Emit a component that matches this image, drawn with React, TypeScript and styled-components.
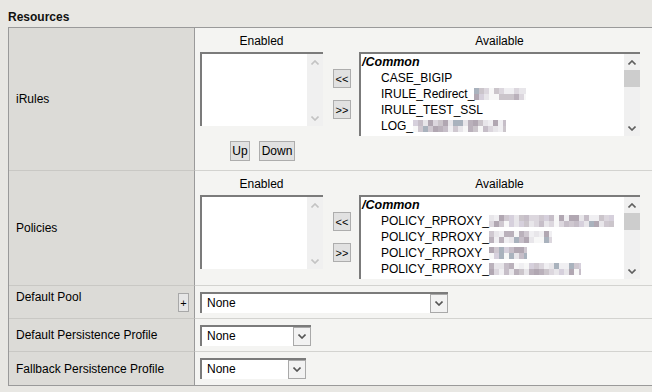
import React from "react";
import styled, { createGlobalStyle } from "styled-components";

const GlobalStyle = createGlobalStyle`
  html, body {
    margin: 0;
    padding: 0;
    background: #e8e7e3;
  }
  body {
    font-family: "Liberation Sans", Arial, sans-serif;
    font-size: 12px;
    color: #000;
  }
`;

const Page = styled.div`
  padding-left: 8px;
  width: 644px;
`;

const Title = styled.h2`
  margin: 0;
  padding: 10px 0 3px;
  font-size: 12px;
  line-height: 14px;
  font-weight: bold;
  color: #111;
`;

const Table = styled.div`
  display: grid;
  grid-template-columns: 186px 1fr;
  border-top: 1px solid #9a9a9a;
  border-left: 1px solid #9a9a9a;
  border-bottom: 1px solid #9a9a9a;
`;

const LabelCell = styled.div<{ $top?: boolean; $last?: boolean }>`
  display: flex;
  align-items: ${(p) => (p.$top ? "flex-start" : "center")};
  justify-content: space-between;
  box-sizing: border-box;
  min-height: 33px;
  padding: ${(p) => (p.$top ? "4px 5px 0 7px" : "0 5px 0 7px")};
  background: #dcdbd7;
  border-right: 1px solid #9a9a9a;
  border-bottom: ${(p) => (p.$last ? "none" : "1px solid #c9c8c4")};
  line-height: 14px;
`;

const ValueCell = styled.div<{ $pick?: boolean; $last?: boolean; $pb?: number }>`
  display: flex;
  flex-direction: ${(p) => (p.$pick ? "column" : "row")};
  align-items: ${(p) => (p.$pick ? "flex-start" : "center")};
  box-sizing: border-box;
  min-height: 33px;
  padding: ${(p) => (p.$pick ? `6px 5px ${p.$pb ?? 6}px` : "0 5px")};
  background: #f4f4f2;
  border-bottom: ${(p) => (p.$last ? "none" : "1px solid #d3d3d0")};
`;

const PickRow = styled.div`
  display: flex;
  align-items: flex-start;
`;

const PickColumn = styled.div<{ $w: number }>`
  display: flex;
  flex-direction: column;
  width: ${(p) => p.$w}px;
`;

const ColHead = styled.div`
  text-align: center;
  line-height: 14px;
  margin-bottom: 4px;
`;

const MoveButtons = styled.div`
  display: flex;
  flex-direction: column;
  gap: 12px;
  width: 18px;
  margin: 35px 8px 0 10px;
`;

const SmallButton = styled.button<{ $w?: number }>`
  box-sizing: border-box;
  width: ${(p) => p.$w ?? 18}px;
  height: ${(p) => (p.$w ? 20 : 19)}px;
  padding: 0;
  margin: 0;
  background: #e1e1e1;
  border: 1px solid #adadad;
  border-radius: 0;
  font-family: "Liberation Sans", Arial, sans-serif;
  font-size: ${(p) => (p.$w ? 12 : 11)}px;
  line-height: 16px;
  color: #000;
`;

const OrderRow = styled.div`
  display: flex;
  gap: 9px;
  margin: 5px 0 0 30px;
`;

const ListBox = styled.div<{ $h: number }>`
  display: flex;
  box-sizing: border-box;
  height: ${(p) => p.$h}px;
  background: #fff;
  border-top: 2px solid #7b7b7b;
  border-left: 2px solid #7b7b7b;
  overflow: hidden;
`;

const ListBody = styled.div`
  flex: 1;
  overflow: hidden;
  line-height: 16px;
  white-space: nowrap;
`;

const Folder = styled.div`
  padding-left: 1px;
  font-weight: bold;
  font-style: italic;
  font-size: 12.5px;
`;

const Item = styled.div`
  padding-left: 20px;
`;

const ScrollBar = styled.div<{ $dim?: boolean }>`
  display: flex;
  flex-direction: column;
  width: 16px;
  background: #f0f0f0;
  color: ${(p) => (p.$dim ? "#c3c3c3" : "#5f5f5f")};
`;

const ScrollArrow = styled.div`
  display: flex;
  align-items: center;
  justify-content: center;
  height: 16px;
`;

const Track = styled.div`
  flex: 1;
`;

const Thumb = styled.div`
  height: 17px;
  background: #cdcdcd;
`;

const PlusButton = styled.span`
  box-sizing: border-box;
  display: flex;
  align-items: center;
  justify-content: center;
  width: 11px;
  height: 19px;
  margin-top: 3px;
  background: #e6e6e6;
  border: 1px solid #a8a8a8;
  font-size: 11px;
`;

const Select = styled.div<{ $w: number }>`
  display: flex;
  box-sizing: border-box;
  width: ${(p) => p.$w}px;
  height: 21px;
  background: #fff;
  border-top: 2px solid #7b7b7b;
  border-left: 2px solid #7b7b7b;
`;

const SelectValue = styled.span`
  flex: 1;
  padding-left: 5px;
  line-height: 19px;
`;

const SelectArrow = styled.span`
  box-sizing: border-box;
  display: flex;
  align-items: center;
  justify-content: center;
  width: 18px;
  height: 19px;
  background: #f2f2f2;
  border: 1px solid #a9a9a9;
  color: #555;
`;

const MosaicSvg = styled.svg`
  display: inline-block;
  vertical-align: -2px;
`;

const PALETTE = [
  "#cfc8d0",
  "#bab1bb",
  "#dcd7de",
  "#a9b2bd",
  "#e8e6ea",
  "#c6bec8",
  "#b1a7b2",
  "#d6d0dc",
  "#f0eff2",
  "#cbc5cb",
  "#f7f7f7",
];

function Mosaic({ width, seed }: { width: number; seed: number }) {
  const cols = Math.ceil(width / 5);
  const rects: React.ReactNode[] = [];
  let s = seed;
  for (let r = 0; r < 2; r++) {
    for (let c = 0; c < cols; c++) {
      s = (s * 9301 + 49297) % 233280;
      rects.push(
        <rect
          key={`${r}-${c}`}
          x={c * 5}
          y={r * 6}
          width={5}
          height={6}
          fill={PALETTE[s % PALETTE.length]}
        />
      );
    }
  }
  return (
    <MosaicSvg width={width} height={12} viewBox={`0 0 ${width} 12`}>
      {rects}
    </MosaicSvg>
  );
}

function Chevron({ up }: { up?: boolean }) {
  return (
    <svg width="8" height="5" viewBox="0 0 8 5">
      <polyline
        points={up ? "0.5,4.5 4,1 7.5,4.5" : "0.5,0.5 4,4 7.5,0.5"}
        fill="none"
        stroke="currentColor"
        strokeWidth="1.6"
      />
    </svg>
  );
}

function Scroller({ dim }: { dim?: boolean }) {
  return (
    <ScrollBar $dim={dim}>
      <ScrollArrow>
        <Chevron up />
      </ScrollArrow>
      <Track>{!dim && <Thumb />}</Track>
      <ScrollArrow>
        <Chevron />
      </ScrollArrow>
    </ScrollBar>
  );
}

type Entry = { text: string; blur?: number };

function PickList({ items, withOrder }: { items: Entry[]; withOrder?: boolean }) {
  return (
    <>
      <PickRow>
        <PickColumn $w={123}>
          <ColHead>Enabled</ColHead>
          <ListBox $h={74}>
            <ListBody />
            <Scroller dim />
          </ListBox>
        </PickColumn>
        <MoveButtons>
          <SmallButton>&lt;&lt;</SmallButton>
          <SmallButton>&gt;&gt;</SmallButton>
        </MoveButtons>
        <PickColumn $w={281}>
          <ColHead>Available</ColHead>
          <ListBox $h={84}>
            <ListBody>
              <Folder>/Common</Folder>
              {items.map((it, i) => (
                <Item key={i}>
                  {it.text}
                  {it.blur ? <Mosaic width={it.blur} seed={i * 37 + it.blur} /> : null}
                </Item>
              ))}
            </ListBody>
            <Scroller />
          </ListBox>
        </PickColumn>
      </PickRow>
      {withOrder && (
        <OrderRow>
          <SmallButton $w={20}>Up</SmallButton>
          <SmallButton $w={36}>Down</SmallButton>
        </OrderRow>
      )}
    </>
  );
}

function Dropdown({ width }: { width: number }) {
  return (
    <Select $w={width}>
      <SelectValue>None</SelectValue>
      <SelectArrow>
        <Chevron />
      </SelectArrow>
    </Select>
  );
}

const irules: Entry[] = [
  { text: "CASE_BIGIP" },
  { text: "IRULE_Redirect_", blur: 52 },
  { text: "IRULE_TEST_SSL" },
  { text: "LOG_", blur: 93 },
];

const policies: Entry[] = [
  { text: "POLICY_RPROXY_", blur: 125 },
  { text: "POLICY_RPROXY_", blur: 63 },
  { text: "POLICY_RPROXY_", blur: 38 },
  { text: "POLICY_RPROXY_", blur: 92 },
];

export default function App() {
  return (
    <Page>
      <GlobalStyle />
      <Title>Resources</Title>
      <Table>
        <LabelCell>iRules</LabelCell>
        <ValueCell $pick $pb={9}>
          <PickList items={irules} withOrder />
        </ValueCell>

        <LabelCell>Policies</LabelCell>
        <ValueCell $pick $pb={6}>
          <PickList items={policies} />
        </ValueCell>

        <LabelCell $top>
          <span>Default Pool</span>
          <PlusButton>+</PlusButton>
        </LabelCell>
        <ValueCell>
          <Dropdown width={248} />
        </ValueCell>

        <LabelCell>Default Persistence Profile</LabelCell>
        <ValueCell>
          <Dropdown width={111} />
        </ValueCell>

        <LabelCell $last>Fallback Persistence Profile</LabelCell>
        <ValueCell $last>
          <Dropdown width={106} />
        </ValueCell>
      </Table>
    </Page>
  );
}
